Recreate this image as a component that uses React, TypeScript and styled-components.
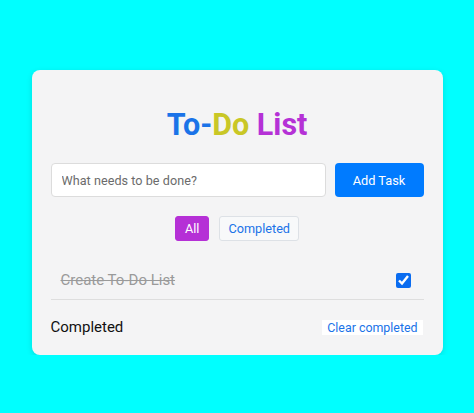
import React from "react";
import styled, { createGlobalStyle } from "styled-components";

const Global = createGlobalStyle`
  html, body { margin: 0; padding: 0; }
  body {
    background: #00ffff;
    font-family: Roboto, "Liberation Sans", Arial, sans-serif;
  }
`;

const Page = styled.div`
  display: flex;
  justify-content: center;
  padding-top: 70px;
`;

const Card = styled.div`
  width: 411px;
  box-sizing: border-box;
  background: #f4f4f5;
  border-radius: 8px;
  padding: 38px 19px 13px;
  box-shadow: 0 2px 6px rgba(0, 0, 0, 0.12);
`;

const Title = styled.h1`
  margin: 0;
  text-align: center;
  font-size: 30.5px;
  line-height: 34px;
  font-weight: 700;
`;

const Part = styled.span<{ $color: string }>`
  color: ${(p) => p.$color};
`;

const InputRow = styled.div`
  display: flex;
  gap: 9px;
  margin-top: 21px;
`;

const TaskInput = styled.input`
  flex: 1;
  height: 34px;
  box-sizing: border-box;
  border: 1px solid #dcdcdc;
  border-radius: 4px;
  background: #fff;
  padding: 0 10px;
  font-family: inherit;
  font-size: 12.6px;
  letter-spacing: 0.05px;
  color: #333;
  &::placeholder { color: #6b6b6b; }
`;

const AddButton = styled.button`
  width: 89px;
  height: 34px;
  border: none;
  border-radius: 4px;
  background: #007bff;
  color: #fff;
  font-family: inherit;
  font-size: 12.8px;
`;

const Filters = styled.div`
  display: flex;
  justify-content: center;
  gap: 10px;
  margin-top: 19px;
`;

const FilterButton = styled.button<{ $active?: boolean }>`
  height: 25px;
  box-sizing: border-box;
  padding: 0 ${(p) => (p.$active ? "9px" : "8px")};
  border-radius: 3px;
  border: 1px solid ${(p) => (p.$active ? "#b530d6" : "#dde1e6")};
  background: ${(p) => (p.$active ? "#b530d6" : "#f8f9fa")};
  color: ${(p) => (p.$active ? "#fff" : "#1a73e8")};
  font-family: inherit;
  font-size: 12.7px;
`;

const List = styled.ul`
  list-style: none;
  margin: 20px 0 0;
  padding: 0;
`;

const Item = styled.li`
  display: flex;
  align-items: center;
  justify-content: space-between;
  height: 38px;
  padding: 0 13px 0 10px;
  border-bottom: 1px solid #dedede;
`;

const ItemText = styled.span<{ $done?: boolean }>`
  font-size: 15px;
  color: ${(p) => (p.$done ? "#9a9a9a" : "#222")};
  text-decoration: ${(p) => (p.$done ? "line-through" : "none")};
`;

const Check = styled.input`
  width: 15px;
  height: 15px;
  margin: 0;
  accent-color: #0a6cf0;
`;

const Footer = styled.div`
  display: flex;
  align-items: center;
  justify-content: space-between;
  height: 30px;
  margin-top: 12px;
`;

const FooterLabel = styled.span`
  font-size: 15px;
  color: #111;
`;

const ClearButton = styled.button`
  height: 15px;
  border: none;
  background: #fff;
  padding: 0 5px;
  margin-right: 1px;
  color: #1a73e8;
  font-family: inherit;
  font-size: 12.4px;
  line-height: 15px;
`;

export default function App() {
  return (
    <>
      <Global />
      <Page>
        <Card>
          <Title>
            <Part $color="#1a73e8">To-</Part>
            <Part $color="#c9c726">Do </Part>
            <Part $color="#b531d6">List</Part>
          </Title>
          <InputRow>
            <TaskInput placeholder="What needs to be done?" />
            <AddButton>Add Task</AddButton>
          </InputRow>
          <Filters>
            <FilterButton $active>All</FilterButton>
            <FilterButton>Completed</FilterButton>
          </Filters>
          <List>
            <Item>
              <ItemText $done>Create To-Do List</ItemText>
              <Check type="checkbox" defaultChecked />
            </Item>
          </List>
          <Footer>
            <FooterLabel>Completed</FooterLabel>
            <ClearButton>Clear completed</ClearButton>
          </Footer>
        </Card>
      </Page>
    </>
  );
}
